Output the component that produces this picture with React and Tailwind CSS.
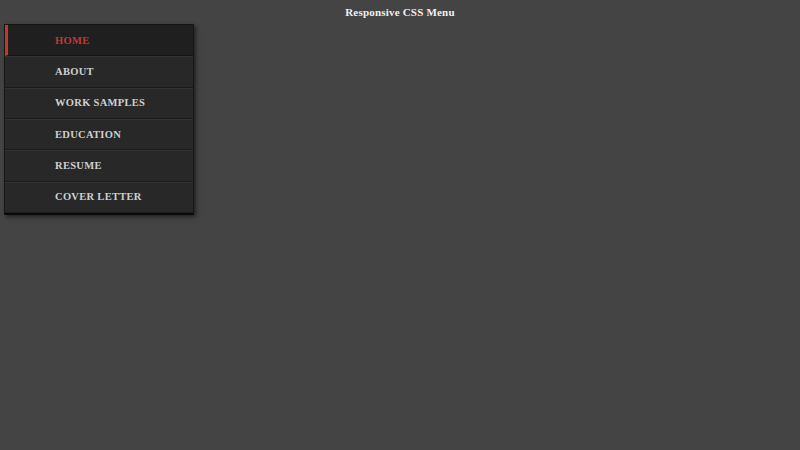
const items = ["HOME", "ABOUT", "WORK SAMPLES", "EDUCATION", "RESUME", "COVER LETTER"];

export default function App() {
  return (
    <div className="min-h-screen w-full bg-[#444444] font-['Liberation_Serif',serif]">
      <h1 className="h-[24px] pt-[5px] text-center text-[11px] font-bold leading-[14px] tracking-[0.2px] text-[#f0f0f0]">
        Responsive CSS Menu
      </h1>
      <nav className="ml-[4px] w-[190px] border border-b-2 border-[#161616] border-b-[#0a0a0a] shadow-[2px_2px_4px_rgba(0,0,0,0.5)]">
        <ul>
          {items.map((item, i) => (
            <li
              key={item}
              className={
                i === 0
                  ? "flex h-[31.33px] items-center border-l-[3px] border-b border-l-[#c0392b] border-b-[#141414] bg-[#1f1f1f] pt-px pl-[47px]"
                  : "flex h-[31.33px] items-center border-t border-b border-t-[#333333] border-b-[#1a1a1a] bg-[#282828] pl-[50px]"
              }
            >
              <span
                className={
                  "text-[10.5px] font-bold tracking-[0.3px] " +
                  (i === 0 ? "text-[#c0393a]" : "text-[#d0d0d0]")
                }
              >
                {item}
              </span>
            </li>
          ))}
        </ul>
      </nav>
    </div>
  );
}
